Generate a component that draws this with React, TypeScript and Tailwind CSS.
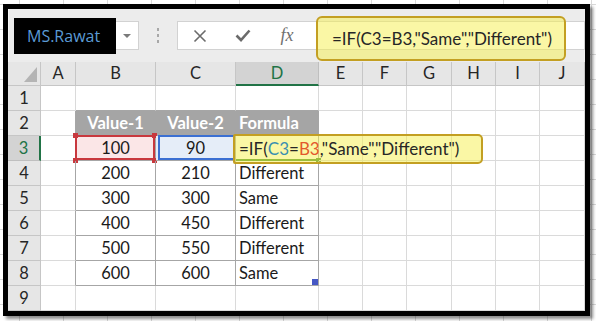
import React from "react";

const COLS = ["A", "B", "C", "D", "E", "F", "G", "H", "I", "J"];
const ROWS = [1, 2, 3, 4, 5, 6, 7, 8, 9];

const DATA: Record<number, string[]> = {
  2: ["Value-1", "Value-2", "Formula"],
  3: ["100", "90", ""],
  4: ["200", "210", "Different"],
  5: ["300", "300", "Same"],
  6: ["400", "450", "Different"],
  7: ["500", "550", "Different"],
  8: ["600", "600", "Same"],
};

const XIcon = () => (
  <svg width="14" height="14" viewBox="0 0 14 14" fill="none" stroke="#6b6b6b" strokeWidth="1.6">
    <path d="M1.5 1.5 L12.5 12.5 M12.5 1.5 L1.5 12.5" />
  </svg>
);

const CheckIcon = () => (
  <svg width="16" height="13" viewBox="0 0 16 13" fill="none" stroke="#6b6b6b" strokeWidth="2.6">
    <path d="M1.5 6.5 L6 11 L14.5 1.5" />
  </svg>
);

function Cell({ r, ci }: { r: number; ci: number }) {
  const inTable = r >= 2 && r <= 8 && ci >= 1 && ci <= 3;
  const text = inTable ? DATA[r][ci - 1] : "";
  const isD = ci === 3;

  let cls = "relative flex items-center border-r border-b text-[16.5px] text-[#1a1a1a] ";
  if (r === 2 && inTable) {
    cls += "bg-[#a5a5a5] border-r-[#a5a5a5] border-b-[#a5a5a5] ";
  } else if (inTable) {
    cls += "border-r-[#a6a6a6] border-b-[#a6a6a6] ";
  } else if (ci === 0 && r >= 2 && r <= 8) {
    cls += "border-r-[#a6a6a6] border-b-[#dadada] ";
  } else if (r === 1 && ci >= 1 && ci <= 3) {
    cls += "border-r-[#dadada] border-b-[#a6a6a6] ";
  } else {
    cls += "border-r-[#dadada] border-b-[#dadada] ";
  }
  if (r === 3 && ci === 1) cls += "bg-[#fbe6e7] ";
  if (r === 3 && ci === 2) cls += "bg-[#e5edf8] ";
  cls += isD ? "justify-start pl-[3px] " : "justify-center ";

  return (
    <div className={cls}>
      {text && <span className={r === 2 ? "text-white font-bold" : "text-[#1a1a1a]"}>{text}</span>}

      {r === 3 && ci === 1 && (
        <>
          <div className="absolute -left-px -top-px right-0 bottom-0 border-2 border-[#c8383e]" />
          <div className="absolute -left-[3px] -top-[3px] w-[5px] h-[5px] bg-[#c8383e]" />
          <div className="absolute -right-[2px] -top-[3px] w-[5px] h-[5px] bg-[#c8383e]" />
          <div className="absolute -left-[3px] -bottom-[3px] w-[5px] h-[5px] bg-[#c8383e]" />
          <div className="absolute -right-[2px] -bottom-[3px] w-[5px] h-[5px] bg-[#c8383e]" />
        </>
      )}

      {r === 3 && ci === 2 && (
        <div className="absolute left-[2px] -top-px right-0 bottom-0 border-2 border-[#3b6fd2]" />
      )}

      {r === 3 && ci === 3 && (
        <>
          <div className="absolute left-0 right-0 -bottom-px h-[2px] bg-[#3f8a2e]" />
          <div className="absolute -right-[3px] -bottom-[3px] w-[5px] h-[5px] bg-[#3f8a2e]" />
          <div className="absolute -left-[3px] -top-[2px] w-[250px] h-[30px] z-10 flex items-center pl-[4px] border-2 border-[#c39f22] rounded-r-[5px] rounded-l-[2px] bg-[#f6ef4c]/50 text-[17px] text-[#262626] whitespace-nowrap">
            =IF(<span className="text-[#3a8fb0]">C3</span>=<span className="text-[#e2592c]">B3</span>,"Same","Different")
          </div>
        </>
      )}

      {r === 8 && ci === 3 && (
        <div className="absolute right-0 bottom-0 w-[6px] h-[6px] bg-[#4557c4]" />
      )}
    </div>
  );
}

export default function App() {
  return (
    <div className="w-[596px] h-[321px] overflow-hidden bg-white bg-[linear-gradient(to_right,#d9d9d9_1px,transparent_1px),linear-gradient(to_bottom,#d9d9d9_1px,transparent_1px)] bg-[size:44px_25px] bg-[position:19px_4px] pt-[4px] pl-[3px] font-['Lato','Liberation_Sans',sans-serif]">
      <div className="w-[587px] h-[312px] border-[5px] border-black bg-white shadow-[3px_3px_3px_rgba(0,0,0,0.45)] flex flex-col">
        {/* toolbar */}
        <div className="relative h-[53px] bg-[#ececec] border-l border-[#f7f7f7] flex items-center pl-[5px]">
          <div className="w-[102px] h-[36px] bg-black flex items-center pl-[13px] font-['Open_Sans',sans-serif] text-[16px] text-[#5b9bd5]">
            MS.Rawat
          </div>
          <div className="w-[23px] h-[29px] bg-white border border-l-0 border-[#d2d2d2] flex items-center justify-center">
            <div className="w-0 h-0 border-l-[4px] border-r-[4px] border-t-[4px] border-l-transparent border-r-transparent border-t-[#7a7a7a]" />
          </div>
          <div className="ml-[18px] flex flex-col gap-[3px]">
            <div className="w-[2px] h-[3px] bg-[#a8a8a8]" />
            <div className="w-[2px] h-[3px] bg-[#a8a8a8]" />
            <div className="w-[2px] h-[3px] bg-[#a8a8a8]" />
          </div>
          <div className="ml-[18px] flex-1 h-[29px] bg-white border border-[#d2d2d2] flex items-center">
            <div className="w-[44px] flex justify-center">
              <XIcon />
            </div>
            <div className="w-[42px] flex justify-center">
              <CheckIcon />
            </div>
            <div className="w-[46px] flex justify-center font-['Liberation_Serif',serif] italic text-[18px] text-[#707070]">
              fx
            </div>
          </div>
          <div className="absolute left-[307px] top-[7px] w-[250px] h-[45px] rounded-[6px] border-2 border-[#c39f22] bg-[#f6ef4c]/50 flex items-center pl-[14px] text-[17px] text-[#262626] whitespace-nowrap">
            =IF(C3=B3,"Same","Different")
          </div>
        </div>

        {/* sheet */}
        <div className="grid grid-cols-[33px_35px_80px_80px_83px_44px_44px_45px_44px_44px_45px] grid-rows-[24px_repeat(9,25px)]">
          <div className="relative bg-[#e6e6e6] border-r border-b border-[#c6c6c6]">
            <svg className="absolute right-[3px] bottom-[3px]" width="13" height="15" viewBox="0 0 13 15">
              <path d="M13 0 L13 15 L0 15 Z" fill="#b4b4b4" />
            </svg>
          </div>
          {COLS.map((c) =>
            c === "D" ? (
              <div
                key={c}
                className="bg-[#d3d3d3] border-r border-[#bfbfbf] border-b-2 border-b-[#217346] flex items-center justify-center text-[16.5px] text-[#217346]"
              >
                {c}
              </div>
            ) : (
              <div
                key={c}
                className="bg-[#e6e6e6] border-r border-b border-[#c6c6c6] flex items-center justify-center text-[16.5px] text-[#262626]"
              >
                {c}
              </div>
            )
          )}
          {ROWS.map((r) => (
            <React.Fragment key={r}>
              {r === 3 ? (
                <div className="bg-[#d3d3d3] border-b border-[#bfbfbf] border-r-2 border-r-[#217346] flex items-center justify-center text-[16.5px] text-[#217346]">
                  {r}
                </div>
              ) : (
                <div className="bg-[#e6e6e6] border-r border-b border-[#c6c6c6] flex items-center justify-center text-[16.5px] text-[#262626]">
                  {r}
                </div>
              )}
              {COLS.map((c, ci) => (
                <Cell key={c} r={r} ci={ci} />
              ))}
            </React.Fragment>
          ))}
        </div>
      </div>
    </div>
  );
}
